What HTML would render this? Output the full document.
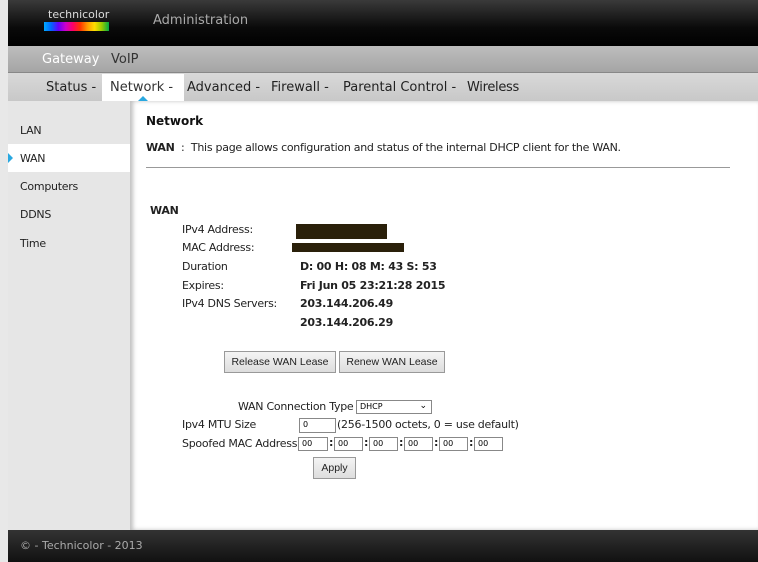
<!DOCTYPE html><html><head><style>
*{margin:0;padding:0;box-sizing:border-box}
body{width:758px;height:562px;overflow:hidden;background:#dcdcdc;font-family:Verdana,"DejaVu Sans",sans-serif;position:relative}
.abs{position:absolute}
#hdr{left:8px;top:0;width:750px;height:46px;background:linear-gradient(#3a3a3a,#0a0a0a 60%,#000)}
#bar1{left:8px;top:46px;width:750px;height:27px;background:linear-gradient(#bdbdbd,#a5a5a5);border-bottom:1px solid #888}
#bar2{left:8px;top:73px;width:750px;height:28px;background:linear-gradient(#d9d9d9,#c8c8c8)}
.t{font-family:"DejaVu Sans",sans-serif;white-space:nowrap}
#side{left:8px;top:101px;width:122px;height:429px;background:#e6e6e6}
#main{left:130px;top:101px;width:628px;height:429px;background:#fff;box-shadow:inset 3px 0 4px rgba(0,0,0,.25)}
#foot{left:8px;top:530px;width:750px;height:32px;background:linear-gradient(#333,#111)}
.s{font-size:11px;color:#222;letter-spacing:-0.27px}
.b{font-weight:bold}
.inp{position:absolute;height:14px;border:1px solid #888;background:#fff;font-size:8px;padding-left:3px;line-height:12px;font-family:"DejaVu Sans",sans-serif}
.btn{position:absolute;height:22px;border:1px solid #999;background:linear-gradient(#f4f4f4,#ddd);font-size:10.5px;text-align:center;line-height:20px;font-family:"Liberation Sans",sans-serif;color:#222}
</style></head><body>
<div class="abs" style="left:0;top:0;width:8px;height:562px;background:#e8e8e8"></div>
<div id="hdr" class="abs"></div>
<div class="abs t" style="left:48px;top:8px;color:#ddd;font-size:11px">technicolor</div>
<div class="abs" style="left:44px;top:22px;width:65px;height:9px;background:linear-gradient(90deg,#0af,#06f,#60f,#c0c,#f06,#f30,#f90,#fd0,#9c0,#0a4)"></div>
<div class="abs t" style="left:153px;top:13px;color:#aaa;font-size:13px">Administration</div>
<div id="bar1" class="abs"></div>
<div class="abs t" style="left:42px;top:52px;color:#fff;font-size:13px">Gateway</div>
<div class="abs t" style="left:111px;top:52px;color:#333;font-size:13px">VoIP</div>
<div id="bar2" class="abs"></div>
<div class="abs" style="left:102px;top:74px;width:82px;height:27px;background:#fff"></div>
<div class="abs" style="left:138px;top:96px;width:0;height:0;border-left:5px solid transparent;border-right:5px solid transparent;border-bottom:5px solid #29a8e0"></div>
<div class="abs t" style="left:46px;top:80px;color:#222;font-size:13px">Status -</div>
<div class="abs t" style="left:110px;top:80px;color:#333;font-size:13px">Network -</div>
<div class="abs t" style="left:187px;top:80px;color:#222;font-size:13px">Advanced -</div>
<div class="abs t" style="left:271px;top:80px;color:#222;font-size:13px">Firewall -</div>
<div class="abs t" style="left:343px;top:80px;color:#222;font-size:13px">Parental Control -</div>
<div class="abs t" style="left:467px;top:80px;color:#222;font-size:13px;letter-spacing:-0.3px">Wireless</div>
<div id="side" class="abs"></div>
<div class="abs" style="left:8px;top:144px;width:122px;height:28px;background:#fff"></div>
<div class="abs" style="left:8px;top:153px;width:0;height:0;border-top:5px solid transparent;border-bottom:5px solid transparent;border-left:5px solid #29a8e0"></div>
<div class="abs t s" style="left:20px;top:124px">LAN</div>
<div class="abs t s" style="left:20px;top:152px">WAN</div>
<div class="abs t s" style="left:20px;top:180px">Computers</div>
<div class="abs t s" style="left:20px;top:208px">DDNS</div>
<div class="abs t s" style="left:20px;top:237px">Time</div>
<div id="main" class="abs"></div>
<div class="abs t b" style="left:146px;top:114px;font-size:12px;color:#111">Network</div>
<div class="abs t s" style="left:146px;top:141px"><b>WAN</b> &nbsp;: &nbsp;This page allows configuration and status of the internal DHCP client for the WAN.</div>
<div class="abs" style="left:146px;top:167px;width:584px;height:1px;background:#999"></div>
<div class="abs t b s" style="left:150px;top:204px">WAN</div>
<div class="abs t s" style="left:182px;top:223px">IPv4 Address:</div>
<div class="abs" style="left:296px;top:224px;width:91px;height:15px;background:#2a200a"></div>
<div class="abs t s" style="left:182px;top:241px">MAC Address:</div>
<div class="abs" style="left:292px;top:243px;width:112px;height:9px;background:#2a200a"></div>
<div class="abs t s" style="left:182px;top:260px">Duration</div>
<div class="abs t s b" style="left:300px;top:260px">D: 00 H: 08 M: 43 S: 53</div>
<div class="abs t s" style="left:182px;top:279px">Expires:</div>
<div class="abs t s b" style="left:300px;top:279px">Fri Jun 05 23:21:28 2015</div>
<div class="abs t s" style="left:182px;top:297px">IPv4 DNS Servers:</div>
<div class="abs t s b" style="left:300px;top:297px">203.144.206.49</div>
<div class="abs t s b" style="left:300px;top:316px">203.144.206.29</div>
<div class="btn" style="left:224px;top:351px;width:112px">Release WAN Lease</div>
<div class="btn" style="left:339px;top:351px;width:106px">Renew WAN Lease</div>
<div class="abs t s" style="left:238px;top:400px">WAN Connection Type</div>
<div class="inp" style="left:356px;top:400px;width:76px">DHCP<span style="position:absolute;right:4px;top:-1px;font-size:9px">&#8964;</span></div>
<div class="abs t s" style="left:182px;top:418px">Ipv4 MTU Size</div>
<div class="inp" style="left:299px;top:418px;width:37px;height:15px">0</div>
<div class="abs t s" style="left:337px;top:418px">(256-1500 octets, 0 = use default)</div>
<div class="abs t s" style="left:182px;top:437px">Spoofed MAC Address</div>
<div class="inp" style="left:298px;top:437px;width:30px">00</div>
<div class="inp" style="left:334px;top:437px;width:29px">00</div>
<div class="inp" style="left:369px;top:437px;width:29px">00</div>
<div class="inp" style="left:404px;top:437px;width:29px">00</div>
<div class="inp" style="left:439px;top:437px;width:29px">00</div>
<div class="inp" style="left:474px;top:437px;width:29px">00</div>
<div class="abs t s b" style="left:329px;top:436px">:</div>
<div class="abs t s b" style="left:364px;top:436px">:</div>
<div class="abs t s b" style="left:399px;top:436px">:</div>
<div class="abs t s b" style="left:434px;top:436px">:</div>
<div class="abs t s b" style="left:469px;top:436px">:</div>
<div class="btn" style="left:313px;top:457px;width:43px">Apply</div>
<div id="foot" class="abs"></div>
<div class="abs t" style="left:20px;top:539px;color:#aaa;font-size:11px">© - Technicolor - 2013</div>
</body></html>
